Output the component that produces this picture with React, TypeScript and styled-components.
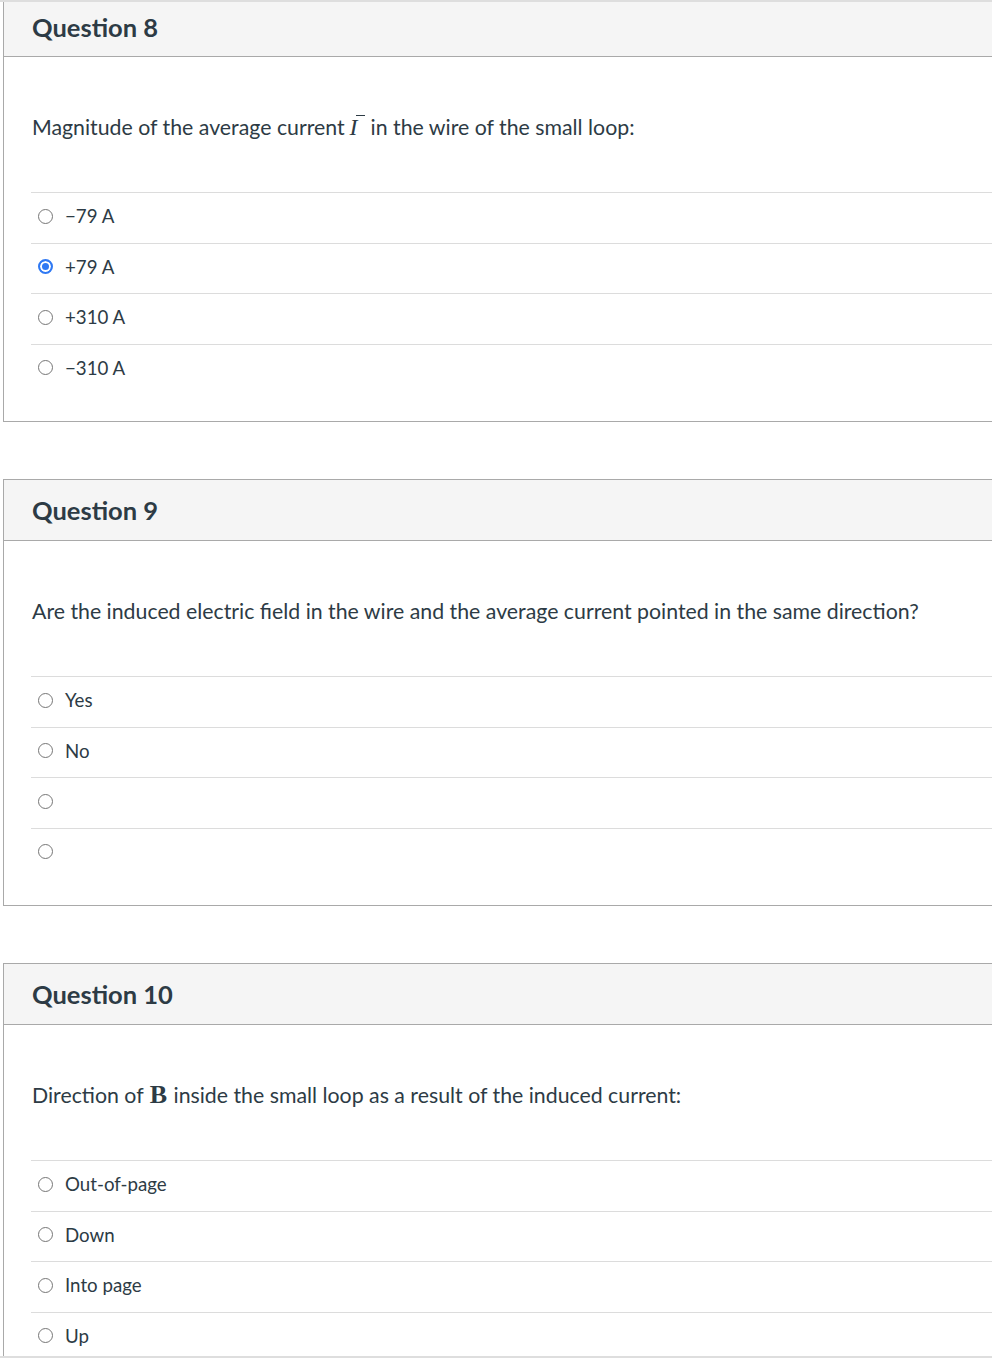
import React from "react";
import styled, { createGlobalStyle } from "styled-components";

const GlobalStyle = createGlobalStyle`
  html, body {
    margin: 0;
    padding: 0;
    background: #fff;
  }
  body {
    font-family: Lato, "Noto Sans", sans-serif;
    color: #2d3b45;
  }
`;

const Page = styled.div`
  box-sizing: border-box;
  height: 1358px;
  overflow: hidden;
  border-top: 2px solid #dedede;
  border-bottom: 2px solid #dedede;
  padding-left: 3px;
`;

const Card = styled.section<{ $cut?: boolean }>`
  margin-right: -20px;
  margin-bottom: 57px;
  border: 1px solid #a9a9a9;
  border-top: ${(p) => (p.$cut ? "none" : "1px solid #a9a9a9")};
  background: #fff;
`;

const Header = styled.header<{ $cut?: boolean }>`
  box-sizing: border-box;
  display: flex;
  align-items: center;
  height: ${(p) => (p.$cut ? "55px" : "61px")};
  padding: 0 28px ${(p) => (p.$cut ? "5px" : "0")};
  background: #f5f5f5;
  border-bottom: 1px solid #a9a9a9;
  font-size: 25.5px;
  font-weight: 700;
  color: #2d3b45;
`;

const Body = styled.div`
  padding: 55px 0 27px 28px;
`;

const Prompt = styled.p`
  margin: 0 0 50px;
  font-size: 21.3px;
  line-height: 30px;
  color: #2d3b45;
`;

const Bar = styled.span`
  position: relative;
  display: inline-block;
  font-family: "Liberation Serif", serif;
  font-style: italic;
  font-size: 24px;
  line-height: 1;
  margin: 0 13px 0 5px;

  &::before {
    content: "";
    position: absolute;
    left: 6px;
    top: 0;
    width: 9px;
    border-top: 1px solid #2d3b45;
  }
`;

const Bold = styled.span`
  font-family: "Liberation Serif", serif;
  font-weight: 700;
  font-size: 26px;
  margin: 0 1px;
`;

const Answers = styled.ul`
  list-style: none;
  margin: 0 0 0 -1px;
  padding: 0;
`;

const Row = styled.li`
  box-sizing: border-box;
  display: flex;
  align-items: center;
  gap: 12px;
  height: 50.5px;
  padding: 0 0 3px 7px;
  border-top: 1px solid #dcdcdc;
  font-size: 18.7px;
  color: #2d3b45;
`;

const Radio = styled.span<{ $on?: boolean }>`
  box-sizing: border-box;
  flex: none;
  width: 15px;
  height: 15px;
  border-radius: 50%;
  border: ${(p) => (p.$on ? "2px solid #2f79f3" : "1px solid #767676")};
  background: ${(p) => (p.$on ? "#2f79f3" : "#fff")};
  box-shadow: ${(p) => (p.$on ? "inset 0 0 0 2px #fff" : "none")};
`;

type Q = {
  n: number;
  prompt: React.ReactNode;
  answers: string[];
  picked?: number;
};

const questions: Q[] = [
  {
    n: 8,
    prompt: (
      <>
        Magnitude of the average current<Bar>I</Bar>in the wire of the small loop:
      </>
    ),
    answers: ["\u221279 A", "+79 A", "+310 A", "\u2212310 A"],
    picked: 1,
  },
  {
    n: 9,
    prompt:
      "Are the induced electric field in the wire and the average current pointed in the same direction?",
    answers: ["Yes", "No", "", ""],
  },
  {
    n: 10,
    prompt: (
      <>
        Direction of <Bold>B</Bold> inside the small loop as a result of the induced current:
      </>
    ),
    answers: ["Out-of-page", "Down", "Into page", "Up"],
  },
];

export default function App() {
  return (
    <>
      <GlobalStyle />
      <Page>
        {questions.map((q, i) => (
          <Card key={q.n} $cut={i === 0}>
            <Header $cut={i === 0}>Question {q.n}</Header>
            <Body>
              <Prompt>{q.prompt}</Prompt>
              <Answers>
                {q.answers.map((a, j) => (
                  <Row key={j}>
                    <Radio $on={q.picked === j} />
                    {a}
                  </Row>
                ))}
              </Answers>
            </Body>
          </Card>
        ))}
      </Page>
    </>
  );
}
